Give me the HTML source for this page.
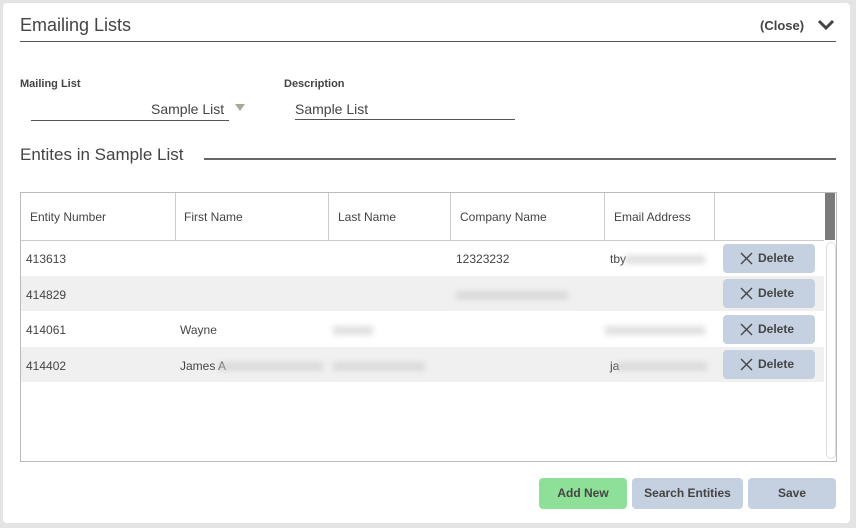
<!DOCTYPE html>
<html><head><style>
body{margin:0;width:856px;height:528px;background:#e4e4e4;font-family:"Liberation Sans",sans-serif;position:relative;overflow:hidden;color:#444}
.card{position:absolute;left:3px;top:3px;width:847px;height:520px;background:#fff;border-radius:4px}
.a{position:absolute;white-space:nowrap}
.blur{position:absolute;height:9px;background:#ccc;filter:blur(3px);opacity:.6}
.del{position:absolute;left:723px;width:92px;height:29px;background:#c5d1e0;border-radius:4px;font-size:12px;font-weight:bold;color:#444;line-height:29px}
.del svg{position:absolute;left:17px;top:8px}
.del span{position:absolute;left:35px}
.btn{position:absolute;top:478px;height:31px;border-radius:4px;font-size:12px;font-weight:bold;color:#444;line-height:31px;text-align:center}
.c{font-size:12px;color:#444}
</style></head><body>
<div class="card"></div>
<div class="a" style="left:20px;top:15px;font-size:18px;color:#444">Emailing Lists</div>
<div class="a" style="left:760px;top:18px;font-size:13px;font-weight:bold;color:#444">(Close)</div>
<svg class="a" style="left:817px;top:19px" width="18" height="12"><path d="M2 2 L9 9 L16 2" stroke="#444" stroke-width="3" fill="none"/></svg>
<div class="a" style="left:20px;top:41px;width:816px;height:1px;background:#555"></div>
<div class="a" style="left:20px;top:78px;font-size:11px;font-weight:bold;color:#444">Mailing List</div>
<div class="a" style="left:284px;top:78px;font-size:11px;font-weight:bold;color:#444">Description</div>
<div class="a" style="left:151px;top:101px;font-size:14px">Sample List</div>
<svg class="a" style="left:235px;top:104px" width="10" height="8"><path d="M0 0 L10 0 L5 7Z" fill="#a8aa98"/></svg>
<div class="a" style="left:31px;top:120px;width:198px;height:1px;background:#555"></div>
<div class="a" style="left:295px;top:101px;font-size:14px">Sample List</div>
<div class="a" style="left:295px;top:119px;width:220px;height:1px;background:#555"></div>
<div class="a" style="left:20px;top:145px;font-size:17px">Entites in Sample List</div>
<div class="a" style="left:204px;top:158px;width:632px;height:2px;background:#666"></div>
<div class="a" style="left:20px;top:192px;width:815px;height:268px;border:1px solid #bbb"></div>
<div class="a" style="left:21px;top:240px;width:803px;height:1px;background:#ccc"></div>
<div class="a" style="left:175px;top:193px;width:1px;height:47px;background:#ccc"></div>
<div class="a" style="left:328px;top:193px;width:1px;height:47px;background:#ccc"></div>
<div class="a" style="left:450px;top:193px;width:1px;height:47px;background:#ccc"></div>
<div class="a" style="left:604px;top:193px;width:1px;height:47px;background:#ccc"></div>
<div class="a" style="left:714px;top:193px;width:1px;height:47px;background:#ccc"></div>
<div class="a" style="left:825px;top:193px;width:10px;height:47px;background:#7a7a7a"></div>
<div class="a" style="left:826px;top:242px;width:8px;height:215px;border:1px solid #ddd;border-radius:5px"></div>
<div class="a c" style="left:30px;top:210px">Entity Number</div>
<div class="a c" style="left:184px;top:210px">First Name</div>
<div class="a c" style="left:338px;top:210px">Last Name</div>
<div class="a c" style="left:460px;top:210px">Company Name</div>
<div class="a c" style="left:614px;top:210px">Email Address</div>
<div class="a" style="left:21px;top:276px;width:803px;height:35px;background:#f0f0f0"></div>
<div class="a" style="left:21px;top:347px;width:803px;height:35px;background:#f0f0f0"></div>
<div class="a c" style="left:26px;top:252px">413613</div>
<div class="a c" style="left:26px;top:288px">414829</div>
<div class="a c" style="left:26px;top:323px">414061</div>
<div class="a c" style="left:26px;top:359px">414402</div>
<div class="a c" style="left:456px;top:252px">12323232</div>
<div class="a c" style="left:610px;top:252px">tby</div>
<div class="blur" style="left:625px;top:255px;width:80px"></div>
<div class="blur" style="left:456px;top:291px;width:112px"></div>
<div class="a c" style="left:180px;top:323px">Wayne</div>
<div class="blur" style="left:333px;top:326px;width:40px"></div>
<div class="blur" style="left:605px;top:326px;width:100px"></div>
<div class="a c" style="left:180px;top:359px">James A</div>
<div class="blur" style="left:218px;top:362px;width:105px"></div>
<div class="blur" style="left:333px;top:362px;width:92px"></div>
<div class="a c" style="left:610px;top:359px">ja</div>
<div class="blur" style="left:617px;top:362px;width:90px"></div>
<div class="del" style="top:244px"><svg width="13" height="13"><path d="M1 1L12 12M12 1L1 12" stroke="#444" stroke-width="1.4"/></svg><span>Delete</span></div>
<div class="del" style="top:279px"><svg width="13" height="13"><path d="M1 1L12 12M12 1L1 12" stroke="#444" stroke-width="1.4"/></svg><span>Delete</span></div>
<div class="del" style="top:315px"><svg width="13" height="13"><path d="M1 1L12 12M12 1L1 12" stroke="#444" stroke-width="1.4"/></svg><span>Delete</span></div>
<div class="del" style="top:350px"><svg width="13" height="13"><path d="M1 1L12 12M12 1L1 12" stroke="#444" stroke-width="1.4"/></svg><span>Delete</span></div>
<div class="btn" style="left:539px;width:88px;background:#8ee099">Add New</div>
<div class="btn" style="left:632px;width:111px;background:#c5d1e0">Search Entities</div>
<div class="btn" style="left:748px;width:88px;background:#c5d1e0">Save</div>
</body></html>
